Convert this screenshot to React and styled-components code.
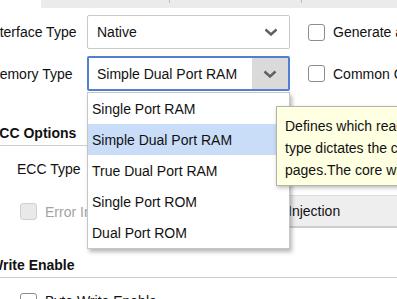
import React from 'react'
import styled, { createGlobalStyle } from 'styled-components'

const GlobalStyle = createGlobalStyle`
    body {
        margin: 0;
        background: #fff;
        font-family: "Liberation Sans", Arial, sans-serif;
        font-size: 14px;
        color: #111;
        overflow: hidden;
    }
`

const Page = styled.div`
    position: relative;
    width: 397px;
    height: 299px;
    overflow: hidden;
`

const TopBar = styled.div`
    display: flex;
    margin-left: 41px;
    height: 8px;
    background: #ebebeb;
`

const Tab = styled.div`
    position: relative;
    width: ${(props) => props.w}px;
    &::after {
        content: '';
        position: absolute;
        right: 0;
        top: 0;
        width: 1px;
        height: 3px;
        background: #bdbdbd;
    }
`

const Form = styled.div`
    margin-left: -12px;
    width: 409px;
    padding-top: 7px;
    display: flex;
    flex-direction: column;
`

const Row = styled.div`
    display: grid;
    grid-template-columns: ${(props) => props.labelW || 99}px 203px 1fr;
    align-items: center;
    height: 34px;
    margin-bottom: ${(props) => props.mb || 0}px;
    padding-left: ${(props) => props.indent || 0}px;
`

const Label = styled.span`
    white-space: nowrap;
    color: ${(props) => (props.disabled ? '#a3a3a3' : '#111')};
`

const Select = styled.div`
    box-sizing: border-box;
    display: flex;
    align-items: stretch;
    height: ${(props) => (props.focused ? 35 : 34)}px;
    border: ${(props) => (props.focused ? '2px solid #4f80d2' : '1px solid #c9c9c9')};
    border-radius: 2px;
    background: #fff;
`

const Value = styled.span`
    flex: 1;
    display: flex;
    align-items: center;
    padding-left: ${(props) => (props.focused ? 8 : 9)}px;
    white-space: nowrap;
`

const Arrow = styled.span`
    width: 36px;
    display: flex;
    align-items: center;
    justify-content: center;
    background: ${(props) => (props.focused ? '#dadada' : 'transparent')};
`

const Check = styled.span`
    box-sizing: border-box;
    flex: none;
    width: 17px;
    height: 17px;
    border: 1px solid ${(props) => (props.disabled ? '#d0d0d0' : '#8c8c8c')};
    border-radius: 3px;
    background: ${(props) => (props.disabled ? '#e9e9e9' : '#fff')};
`

const CheckItem = styled.div`
    display: flex;
    align-items: center;
    gap: 8px;
    height: ${(props) => props.h || 'auto'};
    margin-left: ${(props) => props.ml || 0}px;
    white-space: nowrap;
`

const Heading = styled.div`
    margin-top: ${(props) => props.mt}px;
    margin-left: 2px;
    height: 24px;
    line-height: 24px;
    font-weight: bold;
    border-bottom: 1px solid #cfcfcf;
    margin-bottom: ${(props) => props.mb}px;
`

const ErrorRow = styled.div`
    display: grid;
    grid-template-columns: 187px 1fr;
    align-items: center;
    margin-top: 9px;
    height: 33px;
`

const InjectBox = styled.div`
    box-sizing: border-box;
    height: 33px;
    display: flex;
    align-items: center;
    padding-left: 15px;
    background: #eeeeee;
    border-top: 1px solid #dcdcdc;
    border-bottom: 2px solid #cdcdcd;
    white-space: nowrap;
`

const Menu = styled.ul`
    position: absolute;
    left: 87px;
    top: 92px;
    width: 203px;
    box-sizing: border-box;
    margin: 0;
    padding: 0;
    list-style: none;
    background: #fff;
    border: 1px solid #c6c6c6;
    box-shadow: 2px 3px 4px rgba(0, 0, 0, 0.28);
`

const Item = styled.li`
    height: 31px;
    display: flex;
    align-items: center;
    padding-left: 4px;
    background: ${(props) => (props.active ? '#c9ddf8' : '#fff')};
    white-space: nowrap;
`

const Tooltip = styled.div`
    position: absolute;
    left: 276px;
    top: 106px;
    width: 220px;
    height: 80px;
    box-sizing: border-box;
    padding: 8px 0 0 8px;
    background: #ffffe1;
    border: 1px solid #b4b4a8;
    box-shadow: 1px 2px 4px rgba(0, 0, 0, 0.25);
    line-height: 22px;
    white-space: nowrap;
    color: #111;
`

const Chevron = () => (
    <svg width="14" height="8" viewBox="0 0 14 8">
        <polyline points="1.5,1.5 7,6.5 12.5,1.5" fill="none" stroke="#5f5f5f" strokeWidth="2.4" />
    </svg>
)

const items = ['Single Port RAM', 'Simple Dual Port RAM', 'True Dual Port RAM', 'Single Port ROM', 'Dual Port ROM']

export default function App() {
    return (
        <Page>
            <GlobalStyle />
            <TopBar>
                <Tab w={129} />
                <Tab w={132} />
            </TopBar>
            <Form>
                <Row mb={7}>
                    <Label>Interface Type</Label>
                    <Select>
                        <Value>Native</Value>
                        <Arrow><Chevron /></Arrow>
                    </Select>
                    <CheckItem ml={18}><Check /><Label>Generate address interface with 32 bits</Label></CheckItem>
                </Row>
                <Row>
                    <Label>Memory Type</Label>
                    <Select focused>
                        <Value focused>Simple Dual Port RAM</Value>
                        <Arrow focused><Chevron /></Arrow>
                    </Select>
                    <CheckItem ml={18}><Check /><Label>Common Clock</Label></CheckItem>
                </Row>

                <Heading mt={31} mb={6}>ECC Options</Heading>
                <Row indent={29} labelW={70}>
                    <Label>ECC Type</Label>
                    <Select>
                        <Value>No ECC</Value>
                        <Arrow><Chevron /></Arrow>
                    </Select>
                </Row>
                <ErrorRow>
                    <CheckItem ml={32}><Check disabled /><Label disabled>Error Injection Pins</Label></CheckItem>
                    <InjectBox>Single Bit Error Injection</InjectBox>
                </ErrorRow>

                <Heading mt={25} mb={6}>Write Enable</Heading>
                <CheckItem ml={32} h="34px"><Check /><Label>Byte Write Enable</Label></CheckItem>
            </Form>

            <Menu>
                {items.map((it) => (
                    <Item key={it} active={it === 'Simple Dual Port RAM'}>{it}</Item>
                ))}
            </Menu>
            <Tooltip>
                Defines which read and write ports are available. Memory<br />
                type dictates the configuration of the other tabs and<br />
                pages.The core will be configured accordingly.
            </Tooltip>
        </Page>
    )
}
